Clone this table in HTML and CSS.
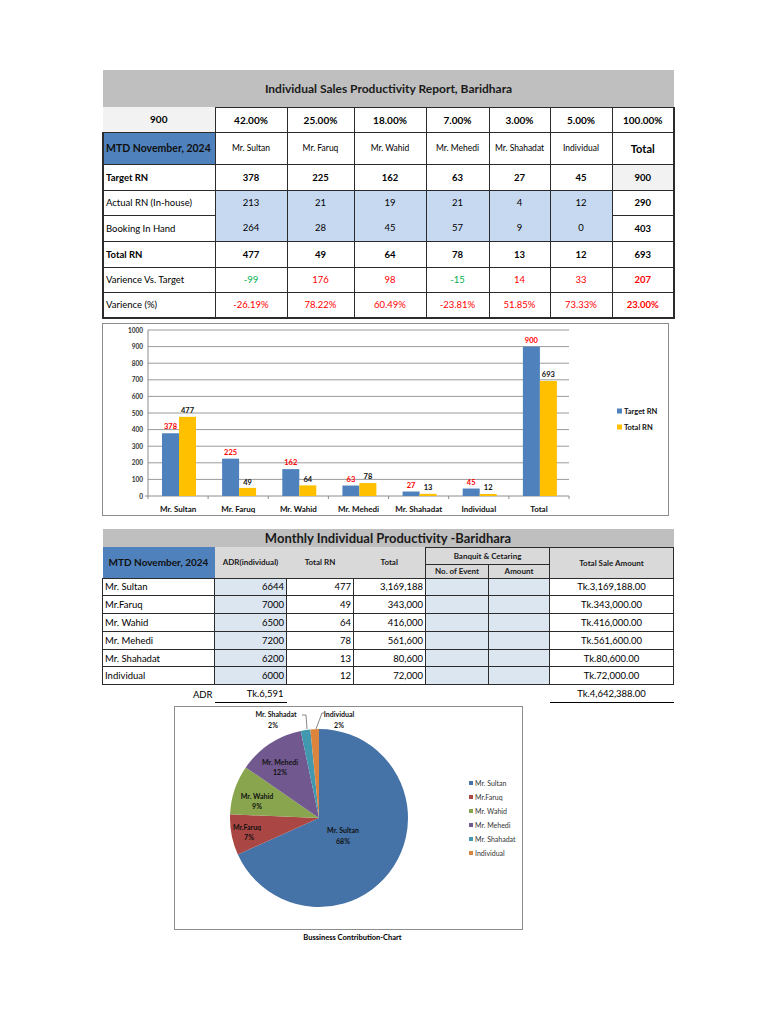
FILE: index.html
```
<!DOCTYPE html>
<html lang="en">
<head>
    <meta charset="UTF-8">
    <title>Individual Sales Productivity Report, Baridhara</title>
    <link rel="stylesheet" href="styles.css">
</head>
<body>
<div class="page">
    <table class="report">
        <colgroup>
            <col class="w112"><col class="w72"><col class="w67"><col class="w72"><col class="w63"><col class="w61"><col class="w62"><col class="w62">
        </colgroup>
        <tr class="title"><th colspan="8">Individual Sales Productivity Report, Baridhara</th></tr>
        <tr class="share">
            <td class="base">900</td><td>42.00%</td><td>25.00%</td><td>18.00%</td><td>7.00%</td><td>3.00%</td><td>5.00%</td><td>100.00%</td>
        </tr>
        <tr class="names">
            <td class="mtd">MTD November, 2024</td><td>Mr. Sultan</td><td>Mr. Faruq</td><td>Mr. Wahid</td><td>Mr. Mehedi</td><td>Mr. Shahadat</td><td>Individual</td><td class="total-head">Total</td>
        </tr>
        <tr class="strong r26">
            <td class="label">Target RN</td><td>378</td><td>225</td><td>162</td><td>63</td><td>27</td><td>45</td><td class="grey">900</td>
        </tr>
        <tr class="actual r25">
            <td class="label">Actual RN (In-house)</td><td class="blue">213</td><td class="blue">21</td><td class="blue">19</td><td class="blue">21</td><td class="blue">4</td><td class="blue">12</td><td class="sum">290</td>
        </tr>
        <tr class="booking r26">
            <td class="label">Booking In Hand</td><td class="blue">264</td><td class="blue">28</td><td class="blue">45</td><td class="blue">57</td><td class="blue">9</td><td class="blue">0</td><td class="sum">403</td>
        </tr>
        <tr class="strong r26">
            <td class="label">Total RN</td><td>477</td><td>49</td><td>64</td><td>78</td><td>13</td><td>12</td><td>693</td>
        </tr>
        <tr class="r25">
            <td class="label">Varience Vs. Target</td><td class="up">-99</td><td class="down">176</td><td class="down">98</td><td class="up">-15</td><td class="down">14</td><td class="down">33</td><td class="down sum">207</td>
        </tr>
        <tr class="r26 last">
            <td class="label">Varience (%)</td><td class="down">-26.19%</td><td class="down">78.22%</td><td class="down">60.49%</td><td class="down">-23.81%</td><td class="down">51.85%</td><td class="down">73.33%</td><td class="down sum">23.00%</td>
        </tr>
    </table>

    <div class="bar-chart">
        <svg width="565" height="191" viewBox="0 0 565 191">
            <!-- grid -->
            <g class="grid">
                <line x1="45" y1="6" x2="466" y2="6"/>
                <line x1="45" y1="22.6" x2="466" y2="22.6"/>
                <line x1="45" y1="39.2" x2="466" y2="39.2"/>
                <line x1="45" y1="55.8" x2="466" y2="55.8"/>
                <line x1="45" y1="72.4" x2="466" y2="72.4"/>
                <line x1="45" y1="89" x2="466" y2="89"/>
                <line x1="45" y1="105.6" x2="466" y2="105.6"/>
                <line x1="45" y1="122.2" x2="466" y2="122.2"/>
                <line x1="45" y1="138.8" x2="466" y2="138.8"/>
                <line x1="45" y1="155.4" x2="466" y2="155.4"/>
            </g>
            <g class="axis">
                <line x1="45" y1="6" x2="45" y2="172"/>
                <line x1="42" y1="172" x2="466" y2="172"/>
                <line x1="45" y1="172" x2="45" y2="175"/>
                <line x1="105.1" y1="172" x2="105.1" y2="175"/>
                <line x1="165.3" y1="172" x2="165.3" y2="175"/>
                <line x1="225.4" y1="172" x2="225.4" y2="175"/>
                <line x1="285.6" y1="172" x2="285.6" y2="175"/>
                <line x1="345.7" y1="172" x2="345.7" y2="175"/>
                <line x1="405.9" y1="172" x2="405.9" y2="175"/>
                <line x1="466" y1="172" x2="466" y2="175"/>
            </g>
            <g class="ylab">
                <text x="40" y="8.5">1000</text>
                <text x="40" y="25.1">900</text>
                <text x="40" y="41.7">800</text>
                <text x="40" y="58.3">700</text>
                <text x="40" y="74.9">600</text>
                <text x="40" y="91.5">500</text>
                <text x="40" y="108.1">400</text>
                <text x="40" y="124.7">300</text>
                <text x="40" y="141.3">200</text>
                <text x="40" y="157.9">100</text>
                <text x="40" y="174.5">0</text>
            </g>
            <g class="target">
                <rect x="59" y="109.25" width="17" height="62.75"/>
                <rect x="119.1" y="134.65" width="17" height="37.35"/>
                <rect x="179.3" y="145.11" width="17" height="26.89"/>
                <rect x="239.4" y="161.54" width="17" height="10.46"/>
                <rect x="299.6" y="167.52" width="17" height="4.48"/>
                <rect x="359.7" y="164.53" width="17" height="7.47"/>
                <rect x="419.9" y="22.6" width="17" height="149.4"/>
            </g>
            <g class="actual">
                <rect x="76" y="92.82" width="17" height="79.18"/>
                <rect x="136.1" y="163.87" width="17" height="8.13"/>
                <rect x="196.3" y="161.38" width="17" height="10.62"/>
                <rect x="256.4" y="159.05" width="17" height="12.95"/>
                <rect x="316.6" y="169.84" width="17" height="2.16"/>
                <rect x="376.7" y="170.01" width="17" height="1.99"/>
                <rect x="436.9" y="56.96" width="17" height="115.04"/>
            </g>
            <g class="vlab red">
                <text x="67.5" y="105">378</text>
                <text x="127.6" y="130.5">225</text>
                <text x="187.8" y="141">162</text>
                <text x="247.9" y="157.5">63</text>
                <text x="308.1" y="163.5">27</text>
                <text x="368.2" y="160.5">45</text>
                <text x="428.4" y="18.5">900</text>
            </g>
            <g class="vlab">
                <text x="84.5" y="88.5">477</text>
                <text x="144.6" y="161">49</text>
                <text x="204.8" y="157.5">64</text>
                <text x="264.9" y="155">78</text>
                <text x="325.1" y="165.5">13</text>
                <text x="385.2" y="165.5">12</text>
                <text x="445.4" y="53">693</text>
            </g>
            <g class="xlab">
                <text x="75.1" y="187.5">Mr. Sultan</text>
                <text x="135.2" y="187.5">Mr. Faruq</text>
                <text x="195.4" y="187.5">Mr. Wahid</text>
                <text x="255.5" y="187.5">Mr. Mehedi</text>
                <text x="315.7" y="187.5">Mr. Shahadat</text>
                <text x="375.8" y="187.5">Individual</text>
                <text x="436" y="187.5">Total</text>
            </g>
            <g class="legend">
                <rect class="sw-target" x="514" y="84.5" width="5" height="5"/>
                <text x="521" y="90">Target RN</text>
                <rect class="sw-actual" x="514" y="100.5" width="5" height="5"/>
                <text x="521" y="106">Total RN</text>
            </g>
        </svg>
    </div>

    <table class="monthly">
        <colgroup>
            <col class="w112"><col class="w72"><col class="w67"><col class="w72"><col class="w63"><col class="w61"><col class="w124">
        </colgroup>
        <tr class="title"><th colspan="7">Monthly Individual Productivity -Baridhara</th></tr>
        <tr class="head-top">
            <th rowspan="2" class="mtd">MTD November, 2024</th>
            <th rowspan="2" class="plain">ADR(individual)</th>
            <th rowspan="2" class="plain">Total RN</th>
            <th rowspan="2" class="plain">Total</th>
            <th colspan="2">Banquit &amp; Cetaring</th>
            <th rowspan="2">Total Sale Amount</th>
        </tr>
        <tr class="head-sub"><th>No. of Event</th><th>Amount</th></tr>
        <tr><td class="name">Mr. Sultan</td><td class="num blue">6644</td><td class="num">477</td><td class="num">3,169,188</td><td class="blue"></td><td class="blue"></td><td class="sale">Tk.3,169,188.00</td></tr>
        <tr><td class="name">Mr.Faruq</td><td class="num blue">7000</td><td class="num">49</td><td class="num">343,000</td><td class="blue"></td><td class="blue"></td><td class="sale">Tk.343,000.00</td></tr>
        <tr><td class="name">Mr. Wahid</td><td class="num blue">6500</td><td class="num">64</td><td class="num">416,000</td><td class="blue"></td><td class="blue"></td><td class="sale">Tk.416,000.00</td></tr>
        <tr><td class="name">Mr. Mehedi</td><td class="num blue">7200</td><td class="num">78</td><td class="num">561,600</td><td class="blue"></td><td class="blue"></td><td class="sale">Tk.561,600.00</td></tr>
        <tr><td class="name">Mr. Shahadat</td><td class="num blue">6200</td><td class="num">13</td><td class="num">80,600</td><td class="blue"></td><td class="blue"></td><td class="sale">Tk.80,600.00</td></tr>
        <tr><td class="name">Individual</td><td class="num blue">6000</td><td class="num">12</td><td class="num">72,000</td><td class="blue"></td><td class="blue"></td><td class="sale">Tk.72,000.00</td></tr>
        <tr class="foot"><td class="adr-label">ADR</td><td class="num line">Tk.6,591</td><td></td><td></td><td></td><td></td><td class="sale line">Tk.4,642,388.00</td></tr>
    </table>

    <div class="pie-chart">
        <svg width="347" height="222" viewBox="0 0 347 222">
            <path class="s-sultan" d="M144,111 L144,22 A89,89 0 1 1 62.85,147.54 Z"/>
            <path class="s-faruq" d="M144,111 L62.85,147.54 A89,89 0 0 1 55.08,107.34 Z"/>
            <path class="s-wahid" d="M144,111 L55.08,107.34 A89,89 0 0 1 70.76,60.43 Z"/>
            <path class="s-mehedi" d="M144,111 L70.76,60.43 A89,89 0 0 1 125.75,23.89 Z"/>
            <path class="s-shahadat" d="M144,111 L125.75,23.89 A89,89 0 0 1 135.35,22.42 Z"/>
            <path class="s-individual" d="M144,111 L135.35,22.42 A89,89 0 0 1 144,22 Z"/>
            <polyline class="leader" points="127,8 131,8 132,22"/>
            <polyline class="leader" points="149,6 147,6 141,22"/>
            <g class="plab">
                <text x="168" y="125.5">Mr. Sultan</text>
                <text x="168" y="136.5">68%</text>
                <text x="72" y="122.5">Mr.Faruq</text>
                <text x="74" y="132.5">7%</text>
                <text x="82" y="91.5">Mr. Wahid</text>
                <text x="82" y="101.5">9%</text>
                <text x="105" y="57.5">Mr. Mehedi</text>
                <text x="105" y="67.5">12%</text>
                <text x="101" y="9.5">Mr. Shahadat</text>
                <text x="98" y="20.5">2%</text>
                <text x="164" y="9.5">Individual</text>
                <text x="164" y="20.5">2%</text>
            </g>
            <g class="plegend">
                <rect class="s-sultan" x="294" y="74" width="4" height="4"/><text x="300" y="78.5">Mr. Sultan</text>
                <rect class="s-faruq" x="294" y="88" width="4" height="4"/><text x="300" y="92.5">Mr.Faruq</text>
                <rect class="s-wahid" x="294" y="102" width="4" height="4"/><text x="300" y="106.5">Mr. Wahid</text>
                <rect class="s-mehedi" x="294" y="116" width="4" height="4"/><text x="300" y="120.5">Mr. Mehedi</text>
                <rect class="s-shahadat" x="294" y="130" width="4" height="4"/><text x="300" y="134.5">Mr. Shahadat</text>
                <rect class="s-individual" x="294" y="144" width="4" height="4"/><text x="300" y="148.5">Individual</text>
            </g>
        </svg>
    </div>
    <p class="pie-caption">Bussiness Contribution-Chart</p>
</div>
</body>
</html>
```

FILE: styles.css
```
*{
    padding: 0;
    margin: 0;
    box-sizing: border-box;
}
body{
    font-family: Lato, "Liberation Sans", sans-serif;
    color: #000;
    background: #fff;
}
.page{
    width: 571px;
    margin: 70px 0 0 102px;
}
table{
    width: 571px;
    border-collapse: collapse;
    table-layout: fixed;
}
.w112{ width: 112px; }
.w72{ width: 72px; }
.w67{ width: 67px; }
.w63{ width: 63px; }
.w61{ width: 61px; }
.w62{ width: 62px; }
.w124{ width: 124px; }

/* first report */
.report td{
    border: 1px solid #2b2b2b;
    text-align: center;
    font-size: 9.5px;
    padding: 0 2px;
    white-space: nowrap;
}
.report .title th{
    background: #bfbfbf;
    height: 37px;
    font-size: 12px;
    font-weight: bold;
    color: #1a1a1a;
    border: none;
}
.report .share td{
    height: 25px;
    font-weight: bold;
    font-size: 10px;
}
.report .share td.base{
    background: #f2f2f2;
    border-left: none;
    border-top: none;
}
.report .names td{
    height: 32px;
    font-size: 8.5px;
}
.report td.mtd{
    background: #4f81bd;
    text-align: left;
    font-weight: bold;
    font-size: 10.5px;
    color: #111;
}
.report td.total-head{
    font-weight: bold;
    font-size: 11px;
}
.report .r26 td{ height: 26px; }
.report .r25 td{ height: 25px; }
.report td.label{
    text-align: left;
    font-size: 9.5px;
}
.report .strong td{ font-weight: bold; }
.report td.grey{ background: #f2f2f2; }
.report td.blue{ background: #c6d9f1; }
.report .actual td.blue{ border-bottom-style: hidden; }
.report td.sum{ font-weight: bold; }
.report td.up{ color: #00b050; }
.report td.down{ color: #ff0000; }
.report td:first-child{ border-left-width: 2px; }
.report td:last-child{ border-right-width: 2px; }
.report .last td{ border-bottom-width: 2px; }
.report .share td:first-child{ border-left: none; }

/* bar chart */
.bar-chart{
    margin-top: 4px;
    width: 567px;
    height: 193px;
    border: 1px solid #8c8c8c;
}
.bar-chart svg{ display: block; }
.grid line{
    stroke: #9a9a9a;
    stroke-width: 1;
}
.axis line{
    stroke: #8c8c8c;
    stroke-width: 1;
}
.ylab text{
    font-size: 6.5px;
    font-weight: bold;
    text-anchor: end;
    fill: #333;
}
.target rect, .sw-target{ fill: #4f81bd; }
.actual rect, .sw-actual{ fill: #ffc000; }
.vlab text{
    font-size: 7.5px;
    font-weight: bold;
    text-anchor: middle;
    fill: #111;
}
.vlab.red text{ fill: #ff0000; }
.xlab text{
    font-size: 8px;
    font-weight: bold;
    text-anchor: middle;
    fill: #111;
}
.legend text{
    font-size: 7.5px;
    font-weight: bold;
    fill: #111;
}

/* monthly table */
.monthly{
    margin-top: 13px;
}
.monthly .title th{
    background: #bfbfbf;
    height: 18px;
    font-size: 13px;
    font-weight: bold;
    color: #1a1a1a;
}
.monthly .head-top th{
    height: 17px;
    background: #d9d9d9;
    border: 1px solid #2b2b2b;
    font-size: 8px;
    font-weight: bold;
    color: #1a1a1a;
}
.monthly .head-sub th{
    height: 14px;
    background: #d9d9d9;
    border: 1px solid #2b2b2b;
    font-size: 8px;
    font-weight: bold;
    color: #1a1a1a;
}
.monthly .head-top th.plain{
    border-left: none;
    border-right: none;
    border-top: none;
}
.monthly .head-top th.mtd{
    background: #4f81bd;
    font-size: 10px;
    color: #111;
    border: none;
}
.monthly td{
    height: 17.8px;
    border: 1px solid #2b2b2b;
    font-size: 9.5px;
    padding: 0 2px;
    white-space: nowrap;
}
.monthly td.name{ text-align: left; }
.monthly td.num{ text-align: right; }
.monthly td.blue{ background: #dce6f1; }
.monthly td.sale{ text-align: center; }
.monthly .foot td{
    height: 18px;
    border: none;
}
.monthly .foot td.adr-label{
    text-align: right;
}
.monthly .foot td.line{
    border-bottom: 1px solid #000;
}
.monthly .foot td.num{ padding-right: 3px; }

/* pie chart */
.pie-chart{
    margin: 3px 0 0 72px;
    width: 349px;
    height: 224px;
    border: 1px solid #8c8c8c;
}
.pie-chart svg{ display: block; }
.s-sultan{ fill: #4572a7; }
.s-faruq{ fill: #aa4643; }
.s-wahid{ fill: #89a54e; }
.s-mehedi{ fill: #71588f; }
.s-shahadat{ fill: #4198af; }
.s-individual{ fill: #db843d; }
.leader{
    fill: none;
    stroke: #555;
    stroke-width: 0.7;
}
.plab text{
    font-size: 7px;
    font-weight: bold;
    text-anchor: middle;
    fill: #111;
}
.plegend text{
    font-size: 7px;
    fill: #333;
}
.pie-caption{
    width: 349px;
    margin: 3px 0 0 76px;
    text-align: center;
    font-size: 7.5px;
    font-weight: bold;
    line-height: 9px;
}
```
